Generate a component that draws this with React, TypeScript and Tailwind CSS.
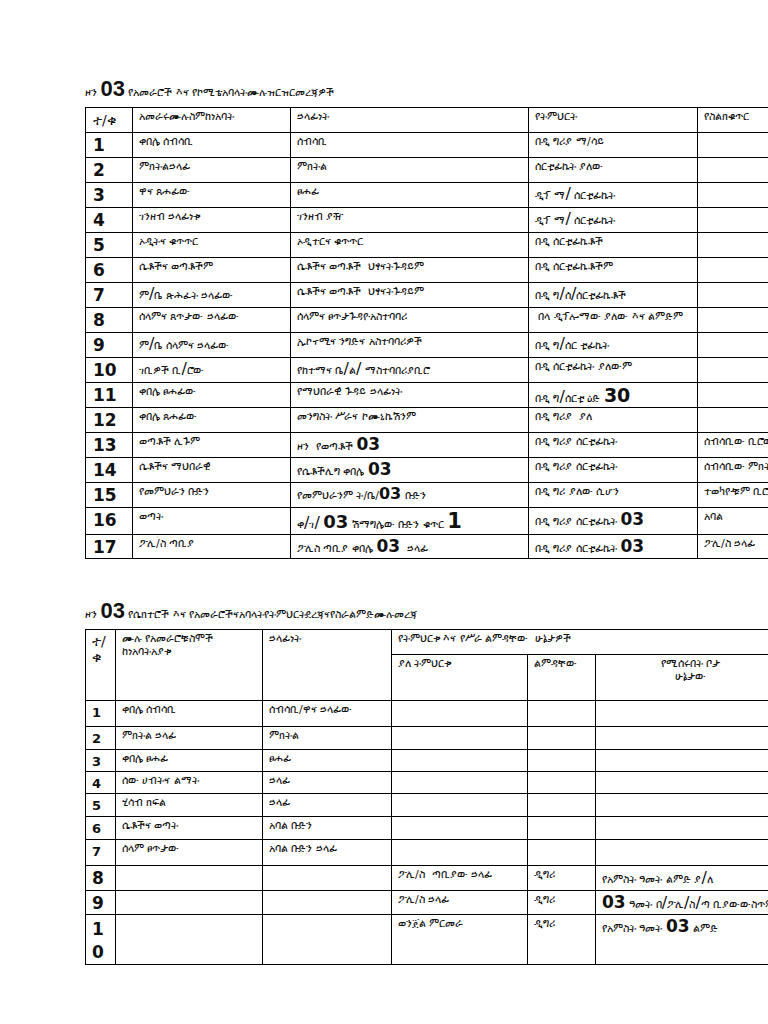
import React from "react";

const S = ({ c = "/" }: { c?: string }) => <span className="text-[16px] leading-[1]">{c}</span>;
const B = ({ c }: { c: string }) => <b className="text-[17px] font-bold leading-[1]">{c}</b>;
const NB = "\u00a0";

type Row = [string, React.ReactNode, React.ReactNode, React.ReactNode, React.ReactNode, string?];

const rows1: Row[] = [
  ["1", "ቀበሌ ሰብሳቢ", "ሰብሳቢ", "በዲ ግሪያ ማ/ሳይ", ""],
  ["2", "ምክትልኃላፊ", "ምክትል", "ሰርቲፊኬት ያለው", ""],
  ["3", "ዋና ጸሐፊው", "ፀሐፊ", <>ዲፕ ማ<S /> ሰርቲፊኬት</>, ""],
  ["4", "ገንዘብ ኃላፊነቱ", "ገንዘብ ያዥ", <>ዲፕ ማ<S /> ሰርቲፊኬት</>, ""],
  ["5", "ኦዲትና ቁጥጥር", "ኦዲተርና ቁጥጥር", "በዲ ሰርቲፊኬቶች", ""],
  ["6", "ሴቶችና ወጣቶችም", "ሴቶችና ወጣቶች\u00a0 ህፃናትጉዳይም", "በዲ ሰርቲፊኬቶችም", ""],
  ["7", <>ም<S />ቤ ጽሕፈት ኃላፊው</>, "ሴቶችና ወጣቶች\u00a0 ህፃናትጉዳይም", <>በዲ ግ<S />ሰ<S />ሰርቲፊኬቶች</>, ""],
  ["8", "ሰላምና ጸጥታው ኃላፊው", "ሰላምና ፀጥታጉዳዮአስተባባሪ", "\u00a0በላ ዲፕሎማው ያለው እና ልምድም", ""],
  ["9", <>ም<S />ቤ ሰላምና ኃላፊው</>, "ኢኮኖሚና ንግድና አስተባባሪዎች", <>በዲ ግ<S />ሰር ቲፊኬት</>, ""],
  ["10", <>ገቢዎች ቢ<S />ሮው</>, <>የከተማና ቤ<S />ል<S /> ማስተባበሪያቢሮ</>, "በዲ ሰርቲፊኬት ያለውም", ""],
  ["11", "ቀበሌ ፀሐፊው", "የማህበራዊ ጉዳይ ኃላፊነት", <>በዲ ግ<S />ሰርቲ ዕድ <b className="text-[19px] font-bold leading-[1]">30</b></>, ""],
  ["12", "ቀበሌ ጸሐፊው", "መንግስት ሥራና ኮሙኒኬሽንም", "በዲ ግሪያ\u00a0 ያለ", ""],
  ["13", "ወጣቶች ሊጉም", <>ዞን{NB} የወጣቶች <B c="03" /></>, "በዲ ግሪያ ሰርቲፊኬት", "ሰብሳቢው ቢሮው"],
  ["14", "ሴቶችና ማህበራዊ", <>የሴቶችሊግ ቀበሌ <B c="03" /></>, "በዲ ግሪያ ሰርቲፊኬት", "ሰብሳቢው ምክትሉም"],
  ["15", "የመምህራን ቡድን", <>የመምህራንም ት/ቤ/<b className="text-[16px] font-bold leading-[1]">03</b> ቡድን</>, "በዲ ግሪ ያለው ሲሆን", "ተወካዮቹም ቢሮው"],
  ["16", "ወጣት", <>ቀ<S />ገ<S /> <b className="text-[18px] font-bold leading-[1]">03</b> ሽማግሌው ቡድን ቁጥር <b className="text-[21px] font-bold leading-[1]">1</b></>, <>በዲ ግሪያ ሰርቲፊኬት <B c="03" /></>, "አባል", "h-[27px]"],
  ["17", "ፖሊ/ስ ጣቢያ", <>ፖሊስ ጣቢያ ቀበሌ <B c="03" />{NB} ኃላፊ</>, <>በዲ ግሪያ ሰርቲፊኬት <B c="03" /></>, "ፖሊ/ስ ኃላፊ", "h-[24px]"],
];

type Row2 = [string, string, string, string];

const rows2: Row2[] = [
  ["1", "ቀበሌ ሰብሳቢ", "ሰብሳቢ/ዋና ኃላፊው", "h-[26px]"],
  ["2", "ምክትል ኃላፊ", "ምክትል", "h-[23px]"],
  ["3", "ቀበሌ ፀሐፊ", "ፀሐፊ", "h-[22px]"],
  ["4", "ሰው ሀብትና ልማት", "ኃላፊ", "h-[22px]"],
  ["5", "ሂሳብ ክፍል", "ኃላፊ", "h-[23px]"],
  ["6", "ሴቶችና ወጣት", "አባል ቡድን", "h-[23px]"],
  ["7", "ሰላም ፀጥታው", "አባል ቡድን ኃላፊ", "h-[26px]"],
];

export default function App() {
  const cell = "border border-black align-top pl-[6px] pr-[4px] pt-[3px] pb-0";
  return (
    <div className="w-[768px] h-[1024px] overflow-hidden bg-white text-[#111] font-['DejaVu_Sans',sans-serif] text-[11px]">
      <div className="pl-[85px] pt-[76px]">
        <div className="leading-[25px] h-[31px] whitespace-nowrap">
          ዞን <b className="font-['Liberation_Sans',Arial,sans-serif] text-[22px] font-bold">03</b> የአመራሮች እና የኮሚቴአባላትሙሉዝርዝርመረጃዎች
        </div>
        <table className="border-collapse table-fixed w-[722px] leading-[1.17]">
          <colgroup>
            <col className="w-[47px]" />
            <col className="w-[158px]" />
            <col className="w-[238px]" />
            <col className="w-[169px]" />
            <col className="w-[110px]" />
          </colgroup>
          <tbody>
            <tr className="h-[25px]">
              <td className={`${cell} text-[14px] pl-[7px] pt-[4px]`}>ተ/ቁ</td>
              <td className={`${cell} whitespace-nowrap`}>አመራሩሙሉስምከነአባት</td>
              <td className={cell}>ኃላፊነት</td>
              <td className={cell}>የትምህርት</td>
              <td className={`${cell} whitespace-nowrap`}>የስልክቁጥር</td>
            </tr>
            {rows1.map((r) => (
              <tr key={r[0]} className={r[5] ? r[5] : "h-[25px]"}>
                <td className={`${cell} pl-[7px] text-[17px] font-bold pt-[2px] leading-[1.1]`}>{r[0]}</td>
                <td className={`${cell} whitespace-nowrap`}>{r[1]}</td>
                <td className={`${cell} whitespace-nowrap`}>{r[2]}</td>
                <td className={`${cell} whitespace-nowrap`}>{r[3]}</td>
                <td className={`${cell} whitespace-nowrap`}>{r[4]}</td>
              </tr>
            ))}
          </tbody>
        </table>

        <div className="leading-[25px] h-[31px] whitespace-nowrap mt-[39px]">
          ዞን <b className="font-['Liberation_Sans',Arial,sans-serif] text-[22px] font-bold">03</b> የሴክተሮች እና የአመራሮችናአባላትየትምህርትደረጃናየስራልምድሙሉመረጃ
        </div>
        <table className="border-collapse table-fixed w-[700px] leading-[1.17]">
          <colgroup>
            <col className="w-[30px]" />
            <col className="w-[147px]" />
            <col className="w-[129px]" />
            <col className="w-[136px]" />
            <col className="w-[68px]" />
            <col className="w-[190px]" />
          </colgroup>
          <tbody>
            <tr className="h-[25px]">
              <td rowSpan={2} className={`${cell} pl-[5px] text-[14px]`}>ተ/ ቁ</td>
              <td rowSpan={2} className={cell}>ሙሉ የአመራሮቹስሞች ከነአባትአያቱ</td>
              <td rowSpan={2} className={cell}>ኃላፊነት</td>
              <td colSpan={3} className={`${cell} whitespace-nowrap`}>የትምህርቱ እና የሥራ ልምዳቸው&nbsp; ሁኔታዎች</td>
            </tr>
            <tr className="h-[46px]">
              <td className={cell}>ያለ ትምህርቱ</td>
              <td className={cell}>ልምዳቸው</td>
              <td className="border border-black align-top px-[4px] pt-[3px] pb-0 text-center">የሚሰሩበት ቦታ<br />ሁኔታው</td>
            </tr>
            {rows2.map((r) => (
              <tr key={r[0]} className={r[3]}>
                <td className={`${cell} pl-[5px] text-[13px] font-bold pt-[5px] leading-[1.1]`}>{r[0]}</td>
                <td className={`${cell} whitespace-nowrap`}>{r[1]}</td>
                <td className={`${cell} whitespace-nowrap`}>{r[2]}</td>
                <td className={cell}></td>
                <td className={cell}></td>
                <td className={cell}></td>
              </tr>
            ))}
            <tr className="h-[25px]">
              <td className={`${cell} pl-[5px] text-[17px] font-bold pt-[1px] leading-[1.1]`}>8</td>
              <td className={cell}></td>
              <td className={cell}></td>
              <td className={`${cell} whitespace-nowrap`}>ፖሊ/ስ&nbsp; ጣቢያው ኃላፊ</td>
              <td className={cell}>ዲግሪ</td>
              <td className={`${cell} whitespace-nowrap pt-[4px]`}>የአምስት ዓመት ልምድ ያ<S />ለ</td>
            </tr>
            <tr className="h-[24px]">
              <td className={`${cell} pl-[5px] text-[17px] font-bold pt-[1px] leading-[1.1]`}>9</td>
              <td className={cell}></td>
              <td className={cell}></td>
              <td className={`${cell} whitespace-nowrap`}>ፖሊ/ስ ኃላፊ</td>
              <td className={cell}>ዲግሪ</td>
              <td className={`${cell} whitespace-nowrap pt-[1px]`}><b className="text-[17px] font-bold leading-[1]">03</b> ዓመት በ<S />ፖሊ<S />ስ<S />ጣ ቢያውውስጥም</td>
            </tr>
            <tr className="h-[48px]">
              <td className={`${cell} pl-[5px] text-[17px] font-bold break-all leading-[23px] pt-0`}>10</td>
              <td className={cell}></td>
              <td className={cell}></td>
              <td className={`${cell} whitespace-nowrap`}>ወንጀል ምርመራ</td>
              <td className={cell}>ዲግሪ</td>
              <td className={`${cell} whitespace-nowrap`}>የአምስት ዓመት <b className="text-[17px] font-bold leading-[1]">03</b> ልምድ</td>
            </tr>
          </tbody>
        </table>
      </div>
    </div>
  );
}
